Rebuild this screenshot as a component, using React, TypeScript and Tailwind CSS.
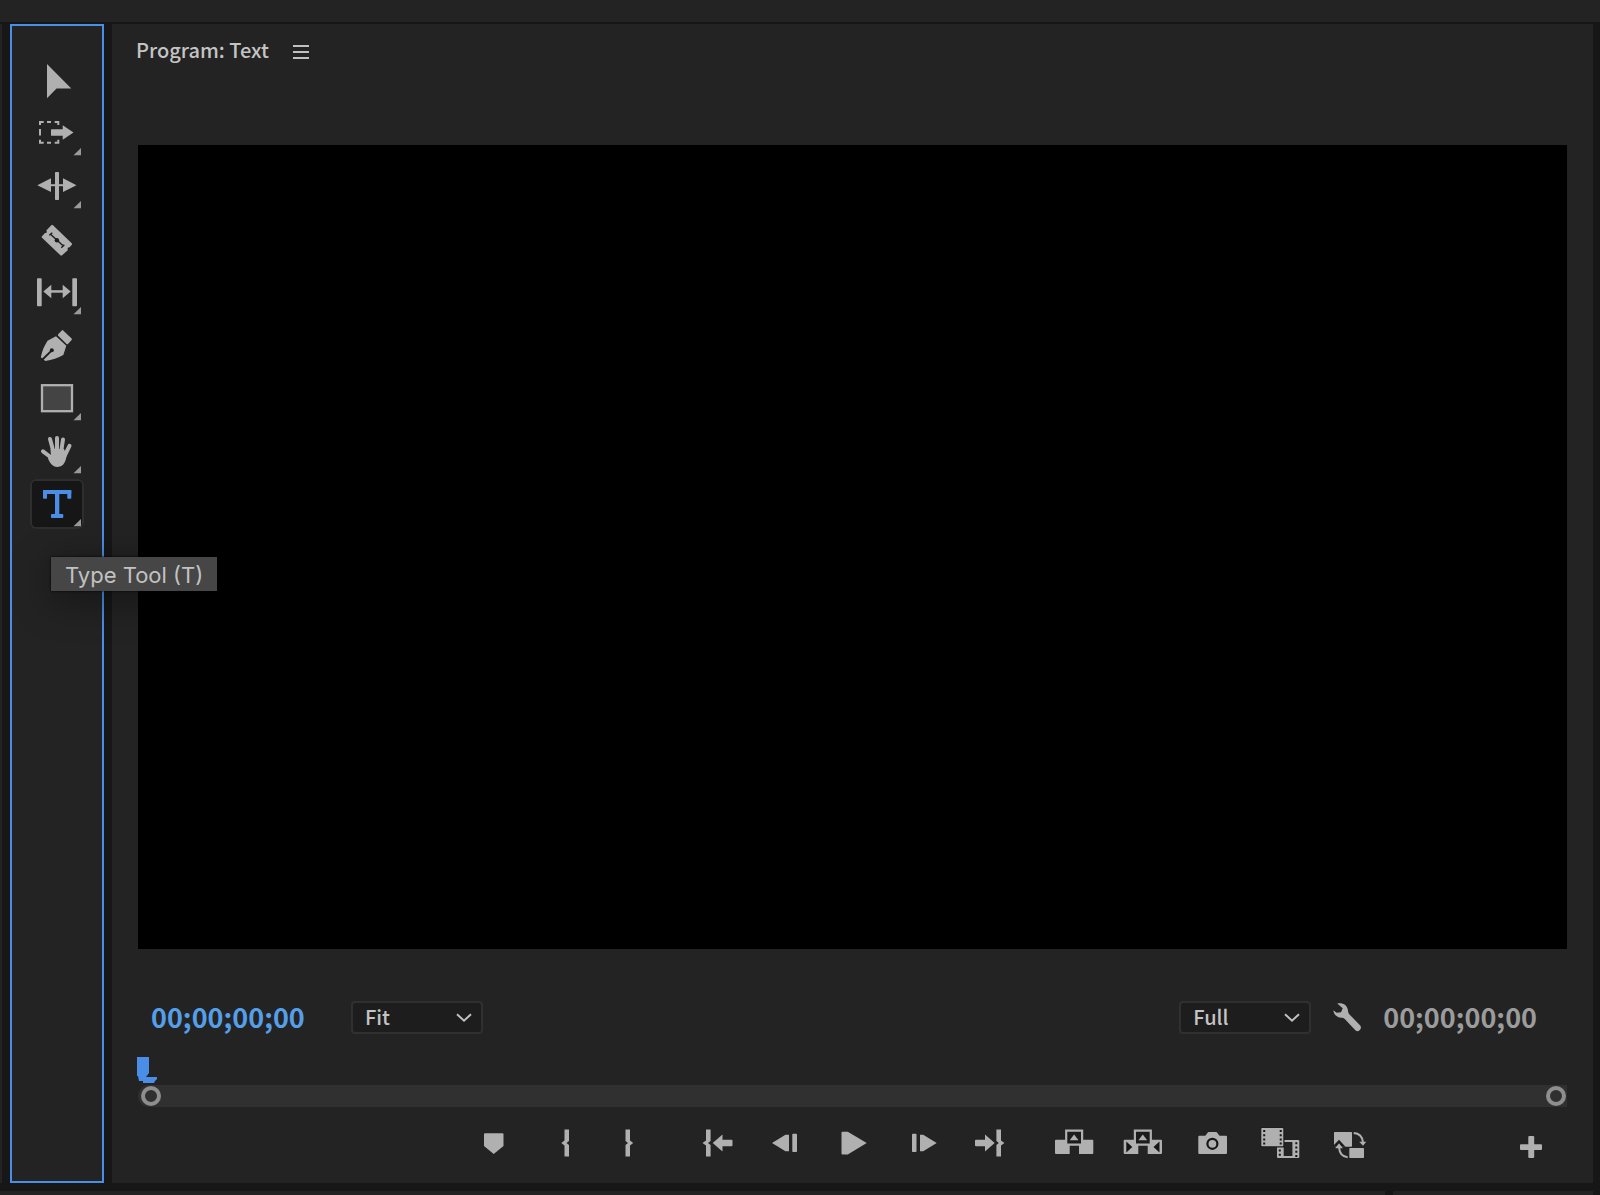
import { useState } from "react";
import type { ReactNode } from "react";

const CornerMark = () => <path d="M51 40v7.300h-7.500z" fill="#9a9a9a" />;

const tools: { name: string; hasMenu: boolean; icon: ReactNode }[] = [
  {
    name: "Selection Tool (V)",
    hasMenu: false,
    icon: <path d="M17 9l24.300 24.400H26.500L17 43.300z" />,
  },
  {
    name: "Track Select Forward Tool (A)",
    hasMenu: true,
    icon: (
      <>
        <path d="M9 13h4.700v2h-2.700v2H9zM17 13h4v2h-4zM24.700 13h4.600v4h-2v-2h-2.600zM9 21h2v6.500H9zM9 31.700h2v2h2.700v2H9zM17 33.700h4v2h-4zM27.300 31.700h2v4h-4.600v-2h2.600z" />
        <path d="M21.500 21.300h11.200v-4L43.500 24.500l-10.800 7.200v-3.900H21.500a.5.5 0 0 1-.5-.5v-5.500a.5.5 0 0 1 .5-.5z" />
      </>
    ),
  },
  {
    name: "Ripple Edit Tool (B)",
    hasMenu: true,
    icon: (
      <>
        <rect x="25" y="11" width="4" height="28" rx="0.7" />
        <path d="M7.300 24.200L21 17.300v13.800zM46.500 24.200L33 17.300v13.800z" />
        <rect x="20" y="23.200" width="14" height="2" />
      </>
    ),
  },
  {
    name: "Razor Tool (C)",
    hasMenu: false,
    icon: (
      <>
        <path d="M23 11.300l18.700 17.900a1.200 1.200 0 0 1 .1 1.600l-2.500 2.800-1.300-.1-.5 1.500.5 1-5.900 5.200a1.200 1.200 0 0 1-1.700 0L12 23.800a1.200 1.200 0 0 1 0-1.600l3-3.200 1.300.1.500-1.500-.5-1.100 5-5.200a1.200 1.200 0 0 1 1.700 0z" />
        <path d="M20.800 20.600l12 11" stroke="#1c1c1c" strokeWidth="1.400" />
        <path
          d="M19.300 21.300l3-2.600M31.300 33.700l3-3"
          stroke="#1c1c1c"
          strokeWidth="1.400"
        />
        <circle cx="26.900" cy="26.200" r="2.200" fill="#1c1c1c" />
      </>
    ),
  },
  {
    name: "Slip Tool (Y)",
    hasMenu: true,
    icon: (
      <>
        <rect x="7" y="11.300" width="4.700" height="28" rx="0.8" />
        <rect x="42.300" y="11.300" width="4.700" height="28" rx="0.8" />
        <path d="M13.300 24.500l8-6.700v13.400zM40.700 24.500l-8-6.700v13.400z" />
        <rect x="20" y="23.200" width="14" height="2.500" />
      </>
    ),
  },
  {
    name: "Pen Tool (P)",
    hasMenu: false,
    icon: (
      <>
        <path d="M33.200 10.400l8.400 8.200a1 1 0 0 1 0 1.400l-3.600 3.900a1 1 0 0 1-1.400 0l-8.400-8.200a1 1 0 0 1 0-1.400l3.600-3.900a1 1 0 0 1 1.400 0z" />
        <path d="M26 16.200l10.300 9.500-3 9.200c-5.300 3-11 5-18 6.100l-4.500-3.700c1.300-6.500 3.400-11.300 6.700-16.600z" />
        <circle cx="21.800" cy="30.300" r="2" fill="#1c1c1c" />
        <path d="M21.800 30.300l-9.800 9.700" stroke="#1c1c1c" strokeWidth="1.800" />
      </>
    ),
  },
  {
    name: "Rectangle Tool",
    hasMenu: true,
    icon: (
      <rect
        x="12"
        y="12.200"
        width="30"
        height="26"
        fill="#444444"
        stroke="#b0b0b0"
        strokeWidth="2.300"
      />
    ),
  },
  {
    name: "Hand Tool (H)",
    hasMenu: true,
    icon: (
      <>
        <path
          d="M13 25.300L20.500 31M20 13l3.500 13M27 12v15M33 13.500l-2 13M39.500 19.800L34.500 30"
          stroke="#b0b0b0"
          strokeWidth="4"
          strokeLinecap="round"
        />
        <path d="M20.500 23h13.500l2.600 6c-.5 5-2.200 11.900-9 11.900-5.500 0-7.800-4.200-9.600-8.400l1.600-3.500 1.400 1z" />
      </>
    ),
  },
  {
    name: "Type Tool (T)",
    hasMenu: true,
    icon: (
      <>
        <rect x="13" y="11" width="28.300" height="4" rx="0.8" fill="#4b8ee8" />
        <rect x="13" y="11" width="4" height="8.700" rx="0.8" fill="#4b8ee8" />
        <rect x="37.300" y="11" width="4" height="8.700" rx="0.8" fill="#4b8ee8" />
        <rect x="25" y="13" width="4.300" height="24" fill="#4b8ee8" />
        <rect x="21" y="35" width="12.300" height="4" rx="1" fill="#4b8ee8" />
      </>
    ),
  },
];

const TransportButton = ({
  label,
  children,
}: {
  label: string;
  children: ReactNode;
}) => (
  <button
    type="button"
    aria-label={label}
    className="block size-10 shrink-0 text-[#b0b0b0] hover:text-white"
  >
    <svg
      viewBox="0 0 40 40"
      fill="currentColor"
      className="size-10 overflow-visible"
    >
      {children}
    </svg>
  </button>
);

const PanelSelect = ({
  label,
  options,
}: {
  label: string;
  options: string[];
}) => (
  <div className="relative">
    <select
      aria-label={label}
      className="block h-[33px] w-[132px] appearance-none rounded border-2 border-[#303030] bg-[#1d1d1d] pl-3 text-[20px] leading-7 font-medium text-[#c4c4c4] outline-none"
    >
      {options.map((option) => (
        <option key={option}>{option}</option>
      ))}
    </select>
    <svg
      viewBox="0 0 16 10"
      fill="none"
      stroke="#c0c0c0"
      strokeWidth="2"
      className="pointer-events-none absolute top-3 right-[11px] h-[10px] w-4"
    >
      <path d="M1 1.200l7 6.500 7-6.500" />
    </svg>
  </div>
);

const ToolsPanel = () => {
  const [active, setActive] = useState(8);

  return (
    <aside className="flex shrink-0 flex-col gap-[3px] border-2 border-[#4b8ee8] bg-[#232323] px-[18px] pt-[29px]">
      {tools.map((tool, index) => (
        <div key={tool.name} className="relative">
          <button
            type="button"
            aria-label={tool.name}
            onClick={() => setActive(index)}
            className={`block h-[50px] w-[54px] rounded-md text-[#b0b0b0] ${
              index === active
                ? "bg-[#161616] ring-2 ring-[#2e2e2e] ring-inset"
                : ""
            }`}
          >
            <svg viewBox="0 0 54 50" fill="currentColor" className="h-[50px]">
              {tool.icon}
              {tool.hasMenu && <CornerMark />}
            </svg>
          </button>
          {index === active && (
            <div
              role="tooltip"
              className="absolute top-[78px] left-[21px] z-10 h-[34px] w-max bg-[#464646] px-[14px] font-[Inter,sans-serif] text-[22px] leading-[36px] text-[#c2c2c2] shadow-[0_8px_40px_rgba(0,0,0,0.45),0_0_2px_#000]"
            >
              {tool.name}
            </div>
          )}
        </div>
      ))}
    </aside>
  );
};

const Transport = () => (
  <div className="mt-4 flex items-center">
    <div className="flex flex-1 items-center justify-end">
      <div className="mr-12 flex">
        <TransportButton label="Add Marker">
          <path d="M12 10.300h17.500a1 1 0 0 1 1 1V23l-9.800 8-9.700-8V11.300a1 1 0 0 1 1-1z" />
        </TransportButton>
        <div className="ml-8 flex gap-6">
          <TransportButton label="Mark In">
            <path d="M19.500 6.500H24V18l-2.500 2 2.500 2v11.500h-4.500v-11L16.300 20l3.200-2.500z" />
          </TransportButton>
          <TransportButton label="Mark Out">
            <path d="M21 6.500h-4.500V18l2.500 2-2.500 2v11.500H21v-11l3.200-2.500-3.200-2.500z" />
          </TransportButton>
        </div>
      </div>
      <div className="mr-7 flex gap-7">
        <TransportButton label="Go to In">
          <path d="M9 6.500h4.600V18l-2.600 2 2.600 2v11.500H9v-11L5.500 20 9 17.500z" />
          <path d="M15.700 20l9.800-8.500v5.200h9a1 1 0 0 1 1 1v4.600a1 1 0 0 1-1 1h-9v5.200z" />
        </TransportButton>
        <TransportButton label="Step Back">
          <path d="M7 20l13.500-8.300H24v16.600h-3.500z" />
          <rect x="27.300" y="10.700" width="4.700" height="18.300" rx="0.700" />
        </TransportButton>
      </div>
    </div>
    <TransportButton label="Play">
      <path d="M9.500 8.700h5.300L33.700 20 14.800 31.500H9.500a1 1 0 0 1-1-1V9.700a1 1 0 0 1 1-1z" />
    </TransportButton>
    <div className="flex flex-1 items-center">
      <div className="mr-11 ml-[29px] flex gap-[29px]">
        <TransportButton label="Step Forward">
          <rect x="10" y="10.700" width="4.500" height="18.300" rx="0.700" />
          <path d="M34.700 20l-13.500-8.300H18v16.600h3.200z" />
        </TransportButton>
        <TransportButton label="Go to Out">
          <path d="M5 16.700h9v-5.200l9.700 8.500-9.700 8.500v-5.200H5a1 1 0 0 1-1-1v-4.600a1 1 0 0 1 1-1z" />
          <path d="M30 6.500h-4.600V18l2.400 2-2.400 2v11.500H30v-11l3.400-2.500L30 17.500z" />
        </TransportButton>
      </div>
      <div className="flex gap-[29px]">
        <TransportButton label="Lift">
          <path d="M1 16.700h13.700V31H1a1 1 0 0 1-1-1V17.700a1 1 0 0 1 1-1zM24 16.700h13.300a1 1 0 0 1 1 1V30a1 1 0 0 1-1 1H24z" />
          <path
            d="M11.200 7.700h15.900v14H11.200z"
            fill="#1c1c1c"
            stroke="currentColor"
            strokeWidth="2.200"
          />
          <path d="M14.700 17.300l4.400-5.800 4.400 5.800z" />
        </TransportButton>
        <TransportButton label="Extract">
          <path d="M.7 16.700h13.600V31H.7a1 1 0 0 1-1-1V17.700a1 1 0 0 1 1-1zM23.700 16.700H37a1 1 0 0 1 1 1V30a1 1 0 0 1-1 1H23.700z" />
          <path d="M2.300 18.500v11l6-5.500zM35.500 18.500v11l-6-5.500z" fill="#161616" />
          <path
            d="M10.900 7.700h15.900v14H10.900z"
            fill="#1c1c1c"
            stroke="currentColor"
            strokeWidth="2.200"
          />
          <path d="M14.400 17.300l4.400-5.800 4.400 5.800z" />
        </TransportButton>
        <TransportButton label="Export Frame">
          <path d="M6.300 12.700h6l2.500-3.200a1 1 0 0 1 .8-.5h7.600a1 1 0 0 1 .8.5l2.500 3.200h6.500a1 1 0 0 1 1 1V30a1 1 0 0 1-1 1H6.300a1 1 0 0 1-1-1V13.700a1 1 0 0 1 1-1z" />
          <circle
            cx="19.400"
            cy="20.800"
            r="5"
            fill="none"
            stroke="#161616"
            strokeWidth="2.200"
          />
        </TransportButton>
        <TransportButton label="Comparison View">
          <path
            fillRule="evenodd"
            d="M16 17h20.300a1 1 0 0 1 1 1v16a1 1 0 0 1-1 1H16a1 1 0 0 1-1-1V18a1 1 0 0 1 1-1zM21.700 19v14h8.700V19z"
          />
          <path
            d="M17.800 26.500v8M34.300 19.300v15"
            stroke="#161616"
            strokeWidth="2"
            strokeDasharray="2 2.200"
          />
          <path d="M-1.500 4h24v20.500h-24z" fill="#1c1c1c" />
          <rect x="-0.700" y="5" width="22" height="18.300" rx="0.800" />
          <path
            d="M2.200 7v15M18.700 7v15"
            stroke="#161616"
            strokeWidth="2"
            strokeDasharray="2 2.200"
          />
        </TransportButton>
        <TransportButton label="Toggle Proxies">
          <rect x="3" y="9" width="18" height="14.700" rx="0.700" />
          <path d="M2.500 22.500L8 16.800l6.500 7H2.500z" fill="#1c1c1c" />
          <path d="M4.200 25.200L8 20.200l3.900 5z" />
          <rect x="18.300" y="25" width="14.700" height="10" rx="0.700" />
          <path
            d="M22.700 10c5 .3 8.600 3.600 9.200 9"
            fill="none"
            stroke="currentColor"
            strokeWidth="2"
          />
          <path d="M28.300 18.700h7L32 22.700z" />
          <path
            d="M16.700 34.200c-5-.3-8.200-3.700-8.700-10"
            fill="none"
            stroke="currentColor"
            strokeWidth="2"
          />
        </TransportButton>
      </div>
      <div className="mr-4 ml-auto">
        <TransportButton label="Button Editor">
          <path d="M18.300 13h3.900a1 1 0 0 1 1 1v7.300H30a1 1 0 0 1 1 1v3.600a1 1 0 0 1-1 1h-6.800V34a1 1 0 0 1-1 1h-3.900a1 1 0 0 1-1-1v-7.100H10a1 1 0 0 1-1-1v-3.600a1 1 0 0 1 1-1h7.300V14a1 1 0 0 1 1-1z" />
        </TransportButton>
      </div>
    </div>
  </div>
);

const ProgramPanel = () => (
  <section className="min-w-0 flex-1 bg-[#232323] pb-5">
    <header className="flex h-14 items-center gap-6 px-6 text-[20px] font-medium text-[#c4c4c4]">
      <h1 className="pb-1 leading-7">Program: Text</h1>
      <button type="button" aria-label="Panel menu">
        <svg viewBox="0 0 16 14" fill="#c0c0c0" className="h-[14px] w-4">
          <path d="M0 0h16v2H0zM0 6h16v2H0zM0 12h16v2H0z" />
        </svg>
      </button>
    </header>

    <div className="px-[26px] pt-[65px]">
      {/* Monitor */}
      <div className="aspect-video w-full bg-black" />

      <div className="mt-[52px] flex h-[33px] items-center pr-[30px] pl-[13px]">
        <time className="w-[200px] text-[27px] leading-8 font-bold text-[#559ee8]">
          00;00;00;00
        </time>
        <PanelSelect
          label="Select Zoom Level"
          options={["Fit", "50%", "100%"]}
        />
        <div className="ml-auto flex items-center">
          <PanelSelect
            label="Select Playback Resolution"
            options={["Full", "1/2", "1/4"]}
          />
          <button type="button" aria-label="Settings" className="mx-[22px]">
            <svg viewBox="0 0 28 30" fill="#b0b0b0" className="h-[30px] w-7">
              <path d="M4.300 1.500C9 .2 14.500 2.600 15 8.500c0 1.500.4 2.700 1.500 3.900l10.700 11.200c1 1.100 1 2.600 0 3.800l-.9 1c-1.100 1.100-2.700 1-3.700 0L12 17.200c-1.200-1.100-2.300-1.400-4-1.500C4 15.500.8 12.500.3 8.300l3.300 2.500 4.500-.5 1.600-4z" />
            </svg>
          </button>
          <time className="text-[27px] leading-8 font-bold text-[#9c9c9c]">
            00;00;00;00
          </time>
        </div>
      </div>

      {/* Playhead and zoom bar */}
      <svg
        viewBox="0 0 24 28"
        fill="#4b8ee8"
        className="mt-[23px] h-7 w-6 overflow-visible"
      >
        <path d="M-1 0h12v16l-3 4h11v2l-2 2-1 2H5v-2H1l-1-5h-1z" />
      </svg>
      <div className="flex h-[22px] items-center justify-between rounded-l-full bg-[#303030] pr-[1px] pl-[3px]">
        <button
          type="button"
          aria-label="Zoom bar start"
          className="size-5 rounded-full border-4 border-[#8e8e8e]"
        />
        <button
          type="button"
          aria-label="Zoom bar end"
          className="size-5 rounded-full border-4 border-[#8e8e8e]"
        />
      </div>

      <Transport />
    </div>
  </section>
);

const App = () => {
  return (
    <div className="flex min-h-screen flex-col bg-[#171717] font-['Noto_Sans_CJK_SC','Noto_Sans',sans-serif]">
      <div className="h-[22px] bg-[#232323]" />
      <div className="mt-[2px] flex flex-1 gap-2 pr-[7px]">
        <div className="w-[2px] bg-[#232323]" />
        <ToolsPanel />
        <ProgramPanel />
      </div>
      <div className="mt-2 flex h-1 gap-2 pr-[7px]">
        <div className="flex-1 bg-[#232323]" />
        <div className="w-[200px] bg-[#232323]" />
      </div>
    </div>
  );
};

export default App;
